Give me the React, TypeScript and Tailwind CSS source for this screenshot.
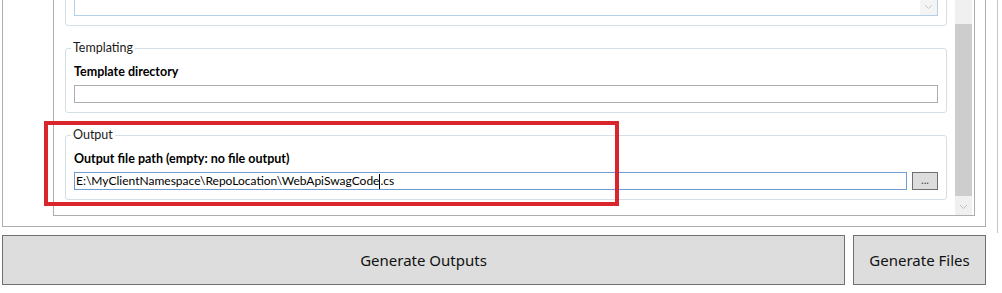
import React from "react";

// WPF-style settings panel: scrolled group boxes + action buttons

function Chevron({ className }: { className?: string }) {
  return (
    <svg width="9" height="6" viewBox="0 0 9 6" className={className}>
      <path d="M1 1 L4.5 4.5 L8 1" fill="none" stroke="currentColor" strokeWidth="1" />
    </svg>
  );
}

function GroupBox({ header, children }: { header: string; children: React.ReactNode }) {
  return (
    <fieldset className="rounded-[3px] border border-[#d5dfe5] px-[8px] pb-[9px] pt-[8px]">
      <legend className="-ml-[3px] px-[2px] font-['Lato',sans-serif] text-[12.5px] leading-[16px] text-[#1a1a1a]">
        {header}
      </legend>
      {children}
    </fieldset>
  );
}

function FieldLabel({ children }: { children: React.ReactNode }) {
  return (
    <div className="font-['Lato',sans-serif] text-[12.5px] font-bold leading-[16px] text-black">{children}</div>
  );
}

export default function App() {
  return (
    <div className="relative h-[293px] w-[1002px] overflow-hidden bg-white font-['Noto_Sans',sans-serif] text-black">
      <div className="h-[233px] w-[998px] border-r border-[#c4c4c4]">
        <div className="ml-[2px] h-[227px] w-[984px] border-x border-b border-[#adadad] pl-[50px] pr-[10px]">
          <div className="flex h-[216px] border-x border-b border-[#adadad]">
            {/* scroll viewport */}
            <div className="flex-1 overflow-hidden pl-[11px] pr-[8px]">
              <div className="-mt-[109px] flex flex-col gap-[14px]">
                <div className="rounded-[3px] border border-[#d5dfe5] px-[8px] pb-[9px] pt-[23px]">
                  <div className="flex h-[101px] border border-[#b4cfe6] bg-white">
                    <div className="flex-1" />
                    <div className="flex w-[17px] flex-col justify-end bg-[#f4f4f4]">
                      <div className="flex h-[17px] items-center justify-center text-[#c8c8c8]">
                        <Chevron />
                      </div>
                    </div>
                  </div>
                </div>

                <GroupBox header="Templating">
                  <FieldLabel>Template directory</FieldLabel>
                  <div className="mt-[5px] h-[18px] border border-[#abadb3] bg-white" />
                </GroupBox>

                <GroupBox header="Output">
                  <FieldLabel>Output file path (empty: no file output)</FieldLabel>
                  <div className="mt-[5px] flex gap-[5px]">
                    <div className="flex h-[18px] flex-1 items-center border border-[#6e9bd2] bg-white pl-[1px] font-['Lato',sans-serif] text-[12px] leading-[16px] text-black">
                      <span>E:\MyClientNamespace\RepoLocation\WebApiSwagCode</span>
                      <span className="h-[15px] w-px bg-black" />
                      <span>.cs</span>
                    </div>
                    <button className="flex h-[18px] w-[26px] items-center justify-center border border-[#707070] bg-[#dddddd] pb-[3px] text-[10px] leading-none text-[#333]">
                      ...
                    </button>
                  </div>
                </GroupBox>
              </div>
            </div>

            {/* vertical scrollbar */}
            <div className="flex w-[17px] flex-col bg-[#f0f0f0]">
              <div className="h-[24px]" />
              <div className="h-[172px] bg-[#cdcdcd]" />
              <div className="h-[2px]" />
              <div className="flex h-[17px] items-center justify-center text-[#bdbdbd]">
                <Chevron />
              </div>
            </div>
            <div className="w-[2px]" />
          </div>
        </div>
      </div>

      <div className="mt-[2px] flex gap-[8px] pl-[2px]">
        <button className="flex h-[50px] w-[843px] items-center justify-center border border-[#707070] bg-[#dddddd] text-[15px] text-[#111]">
          Generate Outputs
        </button>
        <button className="flex h-[50px] w-[133px] items-center justify-center border border-[#707070] bg-[#dddddd] text-[15px] text-[#111]">
          Generate Files
        </button>
      </div>

      {/* annotation frame */}
      <div className="pointer-events-none absolute left-[44px] top-[121px] h-[85px] w-[575px] border-4 border-[#d9262c]" />
    </div>
  );
}
